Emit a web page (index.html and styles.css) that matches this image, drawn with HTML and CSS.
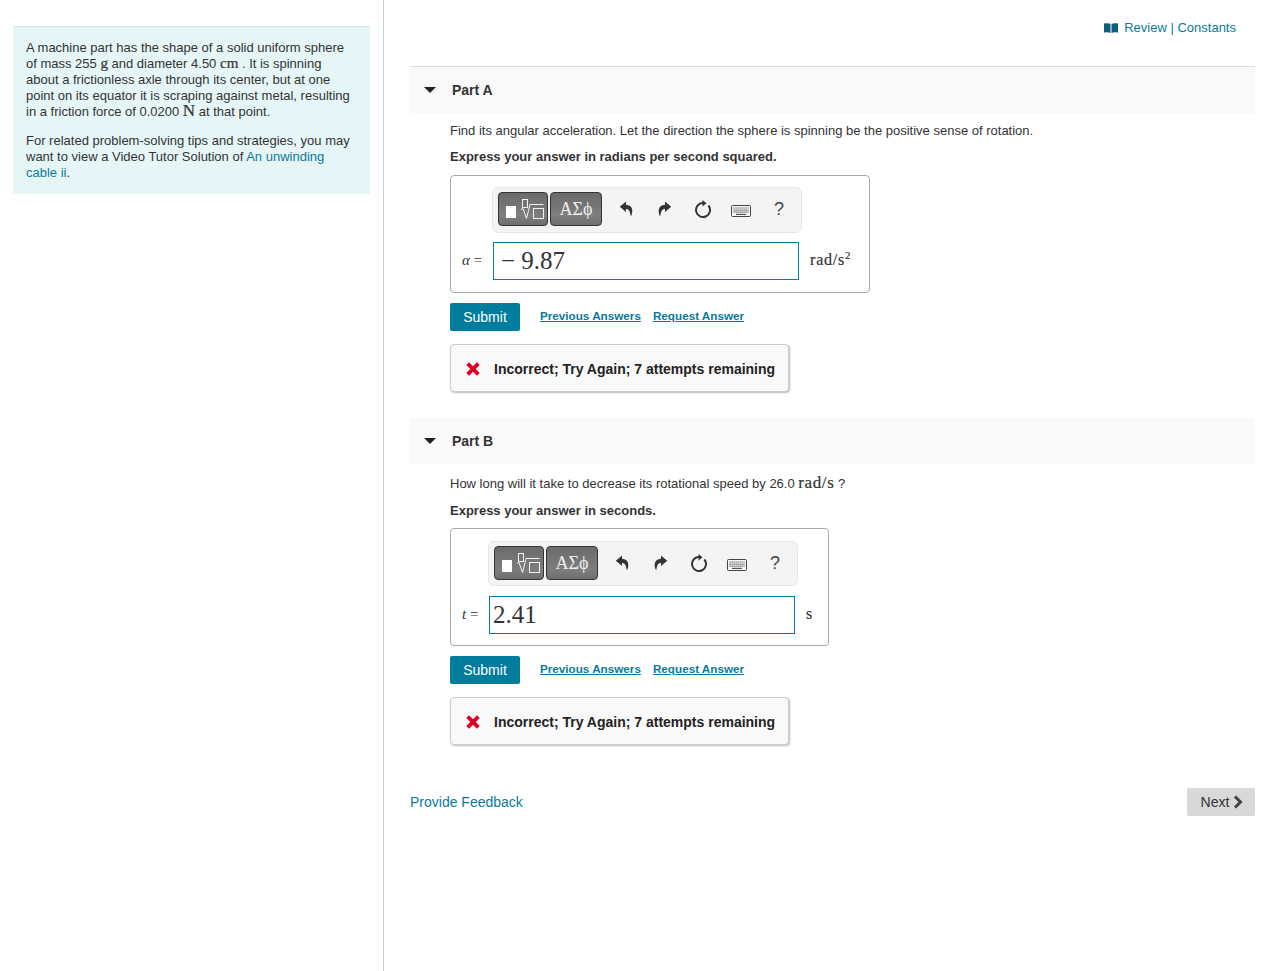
FILE: index.html
```html
<!DOCTYPE html>
<html lang="en">
<head>
<meta charset="utf-8">
<title>Part A and Part B</title>
<link rel="stylesheet" href="styles.css">
</head>
<body>
<svg class="defs" width="0" height="0" aria-hidden="true">
  <symbol id="i-undo" viewBox="0 0 16 16"><path d="M7 .5.8 5.800 7 11V8c2.500 0 4 1.500 4.800 7.500C14.500 11 14 4 7 3.800z"/></symbol>
  <symbol id="i-redo" viewBox="0 0 16 16"><path d="M9 .5l6.200 5.300L9 11V8c-2.500 0-4 1.500-4.800 7.500C1.500 11 2 4 9 3.800z"/></symbol>
  <symbol id="i-reset" viewBox="0 0 18 18"><path d="M14.400 5.500A7 7 0 1 1 9 3" fill="none" stroke="currentColor" stroke-width="2"/><path d="M8.500 0v6.500l4-3.300z"/></symbol>
  <symbol id="i-kbd" viewBox="0 0 20 12"><rect x=".5" y=".5" width="19" height="11" rx="1" fill="#f4f4f4" stroke="#444"/><path d="M2.500 3h15M2.500 5.200h15M2.500 7.200h15" stroke="#555" stroke-width="1.200" stroke-dasharray="1.200 .8"/><path d="M5 9.400h10" stroke="#555" stroke-width="1.200"/></symbol>
  <symbol id="i-x" viewBox="0 0 14 14"><path d="M3 .3 7 4.300 11 .3 13.700 3l-4 4 4 4-2.700 2.700-4-4-4 4L.3 11l4-4-4-4z"/></symbol>
  <symbol id="i-tmpl" viewBox="0 0 44 30"><rect x="5" y="12" width="10" height="12" fill="#fff"/><g fill="none" stroke="#f2f2f2" stroke-width="1"><rect x="21.500" y="5.500" width="5" height="8"/><rect x="32.500" y="14.500" width="10" height="10"/><path d="M20 15.500l2-1 3.500 10L29 10.500h13.500"/></g></symbol>
</svg>

<aside class="side">
  <div class="intro">
    <p>A machine part has the shape of a solid uniform sphere of mass 255 <span class="m">g</span> and diameter 4.50 <span class="m">cm</span> . It is spinning about a frictionless axle through its center, but at one point on its equator it is scraping against metal, resulting in a friction force of 0.0200 <span class="m big">N</span> at that point.</p>
    <p>For related problem-solving tips and strategies, you may want to view a Video Tutor Solution of <a href="#">An unwinding cable ii</a>.</p>
  </div>
</aside>

<main class="main">
  <div class="top">
    <svg class="book" viewBox="0 0 14 10" width="14" height="10"><path d="M0 .6C2 0 4.500 0 6.500 .8V10C4.500 9.200 2 9.200 0 9.800zM14 .6C12 0 9.500 0 7.500 .8V10c2-.8 4.500-.8 6.500-.2z" fill="#0b5f7c"/></svg>
    <a href="#">Review</a> <span class="sep">|</span> <a href="#">Constants</a>
  </div>

  <section class="part part-a">
    <h2 class="part-head"><span class="caret"></span>Part A</h2>
    <div class="part-body">
      <p class="q">Find its angular acceleration. Let the direction the sphere is spinning be the positive sense of rotation.</p>
      <p class="hint">Express your answer in radians per second squared.</p>
      <div class="box box-a">
        <div class="tools">
          <span class="tbtn tbtn-t"><svg width="44" height="30"><use href="#i-tmpl"/></svg></span>
          <span class="tbtn tbtn-g">ΑΣϕ</span>
          <svg class="ic ic-undo"><use href="#i-undo"/></svg>
          <svg class="ic ic-redo"><use href="#i-redo"/></svg>
          <svg class="ic ic-reset"><use href="#i-reset"/></svg>
          <svg class="ic ic-kbd"><use href="#i-kbd"/></svg>
          <span class="help">?</span>
        </div>
        <div class="entry">
          <span class="lab"><i>α</i> =</span>
          <div class="field field-a">− 9.87</div>
          <span class="unit">rad/s<sup>2</sup></span>
        </div>
      </div>
      <div class="actions">
        <button class="submit" type="button">Submit</button>
        <a href="#" class="act">Previous Answers</a>
        <a href="#" class="act">Request Answer</a>
      </div>
      <div class="fb"><svg class="x"><use href="#i-x"/></svg>Incorrect; Try Again; 7 attempts remaining</div>
    </div>
  </section>

  <section class="part part-b">
    <h2 class="part-head"><span class="caret"></span>Part B</h2>
    <div class="part-body">
      <p class="q q-b">How long will it take to decrease its rotational speed by 26.0 <span class="m big">rad/s</span> ?</p>
      <p class="hint">Express your answer in seconds.</p>
      <div class="box box-b">
        <div class="tools">
          <span class="tbtn tbtn-t"><svg width="44" height="30"><use href="#i-tmpl"/></svg></span>
          <span class="tbtn tbtn-g">ΑΣϕ</span>
          <svg class="ic ic-undo"><use href="#i-undo"/></svg>
          <svg class="ic ic-redo"><use href="#i-redo"/></svg>
          <svg class="ic ic-reset"><use href="#i-reset"/></svg>
          <svg class="ic ic-kbd"><use href="#i-kbd"/></svg>
          <span class="help">?</span>
        </div>
        <div class="entry">
          <span class="lab"><i>t</i> =</span>
          <div class="field field-b">2.41</div>
          <span class="unit">s</span>
        </div>
      </div>
      <div class="actions">
        <button class="submit" type="button">Submit</button>
        <a href="#" class="act">Previous Answers</a>
        <a href="#" class="act">Request Answer</a>
      </div>
      <div class="fb"><svg class="x"><use href="#i-x"/></svg>Incorrect; Try Again; 7 attempts remaining</div>
    </div>
  </section>

  <footer class="foot">
    <a href="#">Provide Feedback</a>
    <button class="next" type="button">Next<svg viewBox="0 0 10 14" width="10" height="14"><path d="M2 1.500 7.500 7 2 12.500" fill="none" stroke="#444" stroke-width="3"/></svg></button>
  </footer>
</main>
</body>
</html>
```

FILE: styles.css
```css
* { box-sizing: border-box; }
html, body { height: 100%; }
body {
  margin: 0;
  display: flex;
  min-height: 971px;
  font-family: "Liberation Sans", Arial, sans-serif;
  font-size: 13px;
  color: #333;
  background: #fff;
  overflow: hidden;
}
a { color: #0a7a9a; text-decoration: none; }
p { margin: 0; }
.defs { position: absolute; }

.side {
  flex: 0 0 384px;
  border-right: 1px solid #c5cfdf;
  padding: 26px 13px 0 13px;
}
.intro {
  background: #e6f6f7;
  border-top: 1px solid #dde3e8;
  padding: 13px 13px 13px 13px;
  line-height: 16px;
  font-size: 13px;
}
.intro p + p { margin-top: 13px; }
.m { font-family: "Liberation Serif", serif; font-size: 15px; line-height: 0; -webkit-text-stroke: .2px; }
.big { font-size: 17px; }
.q-b .big { letter-spacing: .6px; }

.main { flex: 1; padding: 0 25px 0 26px; min-width: 0; }
.top {
  height: 66px;
  padding: 20px 19px 0 0;
  text-align: right;
  line-height: 16px;
}
.book { margin-right: 3px; vertical-align: -1px; }
.sep { color: #0a7a9a; }

.part-head {
  margin: 0;
  height: 47px;
  background: #f9f9f9;
  display: flex;
  align-items: center;
  font-size: 14px;
  font-weight: 700;
  color: #333;
  padding-left: 14px;
}
.part-a .part-head { border-top: 1px solid #ddd; }
.part-b { margin-top: 26px; }
.part-b .part-head { height: 46px; }
.caret {
  width: 0; height: 0;
  border-left: 6px solid transparent;
  border-right: 6px solid transparent;
  border-top: 6px solid #222;
  margin-right: 16px;
}
.part-body { padding-left: 40px; }
.q { padding-top: 10px; line-height: 16px; }
.q-b { padding-top: 11px; line-height: 18px; }
.hint { margin-top: 10px; line-height: 16px; font-weight: 700; }
.box {
  border: 1px solid #aaa;
  border-radius: 4px;
  margin-top: 10px;
  padding: 11px 0 0 10px;
  height: 118px;
}
.box-a { width: 420px; }
.box-b { width: 379px; margin-top: 9px; }
.tools {
  width: 310px;
  height: 46px;
  background: #f4f4f4;
  border: 1px solid #e6e6e6;
  border-radius: 6px;
  display: flex;
  align-items: center;
  padding: 0 0 2px 5px;
  color: #333;
}
.box-a .tools { margin-left: 31px; }
.box-b .tools { margin-left: 27px; height: 45px; margin-top: 1px; padding-bottom: 1px; }
.tbtn {
  height: 34px;
  border: 1px solid #333;
  border-radius: 4px;
  background: linear-gradient(#6a6a6a, #7e7e7e 70%, #6e6e6e);
  display: flex;
  align-items: center;
  justify-content: center;
  color: #eee;
}
.tbtn-t { width: 50px; margin-right: 2px; }
.tbtn-g { width: 52px; font-family: "Liberation Serif", serif; font-size: 18px; }
.ic { fill: #333; color: #333; flex: none; }
.ic-undo { width: 16px; height: 16px; margin-left: 17px; }
.ic-redo { width: 16px; height: 16px; margin-left: 21px; }
.ic-reset { width: 18px; height: 18px; margin-left: 22px; }
.ic-kbd { width: 20px; height: 12px; margin-left: 19px; margin-top: 3px; }
.help { margin-left: 23px; font-size: 18px; color: #444; }
.entry { display: flex; align-items: center; margin-top: 9px; }
.box-b .entry { margin-top: 10px; }
.lab { font-family: "Liberation Serif", serif; font-size: 15px; flex: none; padding: 0 0 2px 1px; }
.box-a .lab { width: 32px; }
.box-b .lab { width: 28px; }
.field {
  flex: none;
  width: 306px;
  height: 38px;
  border: 1px solid #007c9c;
  font-family: "Liberation Serif", serif;
  font-size: 25px;
  line-height: 36px;
  color: #333;
}
.field-a { padding-left: 7px; }
.field-b { padding-left: 3px; }
.unit { font-family: "Liberation Serif", serif; font-size: 16px; letter-spacing: .8px; margin-left: 11px; padding-bottom: 2px; -webkit-text-stroke: .2px; }
.unit sup { font-size: 11px; line-height: 0; }
.actions { display: flex; align-items: center; margin-top: 10px; height: 28px; }
.submit {
  width: 70px;
  height: 28px;
  border: 0;
  border-radius: 2px;
  background: #007c9c;
  color: #fff;
  font: 14px "Liberation Sans", Arial, sans-serif;
  padding: 0;
}
.act { font-size: 11.7px; font-weight: 700; text-decoration: underline; margin-left: 12px; position: relative; top: -2px; }
.submit + .act { margin-left: 20px; }
.fb {
  width: 339px;
  height: 48px;
  margin-top: 13px;
  background: #f9f9f9;
  border: 1px solid #ccc;
  border-radius: 4px;
  box-shadow: 1px 1px 2px #bbb;
  display: flex;
  align-items: center;
  padding: 2px 0 0 15px;
  font-size: 14px;
  font-weight: 700;
  color: #222;
  white-space: nowrap;
}
.x { width: 14px; height: 14px; fill: #dc0024; margin-right: 14px; flex: none; }
.foot {
  margin-top: 43px;
  height: 28px;
  display: flex;
  justify-content: space-between;
  align-items: center;
  font-size: 14px;
}
.next {
  width: 68px;
  height: 28px;
  border: 0;
  border-radius: 2px;
  background: #d9d9d9;
  color: #333;
  font: 14px "Liberation Sans", Arial, sans-serif;
  padding: 0 0 0 2px;
  display: flex;
  align-items: center;
  justify-content: center;
  gap: 4px;
}
```
